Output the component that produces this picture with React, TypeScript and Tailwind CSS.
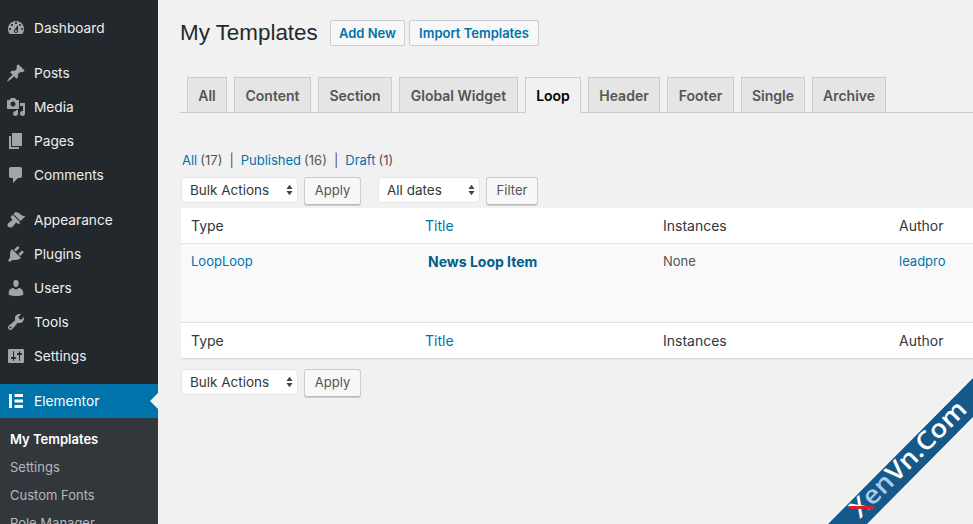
const icons: Record<string, string> = {
  dashboard:
    "M3.76 16h12.48c1.1-1.37 1.76-3.11 1.76-5 0-4.42-3.58-8-8-8s-8 3.58-8 8c0 1.89.66 3.63 1.76 5zM10 4c.55 0 1 .45 1 1s-.45 1-1 1-1-.45-1-1 .45-1 1-1zM6 6c.55 0 1 .45 1 1s-.45 1-1 1-1-.45-1-1 .45-1 1-1zm8 0c.55 0 1 .45 1 1s-.45 1-1 1-1-.45-1-1 .45-1 1-1zm-5.37 5.55L12 7v6c0 1.1-.9 2-2 2s-2-.9-2-2c0-.57.24-1.08.63-1.45zM4 10c.55 0 1 .45 1 1s-.45 1-1 1-1-.45-1-1 .45-1 1-1zm12 0c.55 0 1 .45 1 1s-.45 1-1 1-1-.45-1-1 .45-1 1-1zm-5 3c0-.55-.45-1-1-1s-1 .45-1 1 .45 1 1 1 1-.45 1-1z",
  posts:
    "M10.44 3.02l1.82-1.82 6.36 6.35-1.83 1.82c-1.05-.68-2.48-.57-3.41.36l-.75.75c-.92.93-1.04 2.35-.35 3.41l-1.83 1.82-2.41-2.41-2.8 2.79c-.42.42-3.38 2.71-3.8 2.29s1.86-3.39 2.28-3.81l2.79-2.79L4.1 9.36l1.83-1.82c1.05.69 2.48.57 3.4-.36l.75-.75c.93-.92 1.05-2.35.36-3.41z",
  media:
    "M13 11V4c0-.55-.45-1-1-1h-1.67L9 1H5L3.67 3H2c-.55 0-1 .45-1 1v7c0 .55.45 1 1 1h10c.55 0 1-.45 1-1zM7 4.5c1.38 0 2.5 1.12 2.5 2.5S8.38 9.5 7 9.5 4.5 8.38 4.5 7 5.62 4.5 7 4.5zM14 6h5v10.5c0 1.38-1.12 2.5-2.5 2.5S14 17.88 14 16.5s1.12-2.5 2.5-2.5c.17 0 .34.02.5.05V9h-3V6zm-4 8.05V13h2v3.5c0 1.38-1.12 2.5-2.5 2.5S7 17.88 7 16.5 8.12 14 9.5 14c.17 0 .34.02.5.05z",
  pages: "M6 15V2h10v13H6zm-1 1h8v2H3V5h2v11z",
  comments:
    "M5 2h9c1.1 0 2 .9 2 2v7c0 1.1-.9 2-2 2h-2l-5 5v-5H5c-1.1 0-2-.9-2-2V4c0-1.1.9-2 2-2z",
  appearance:
    "M14.48 11.06L7.41 3.99l1.5-1.5c.5-.56 2.3-.47 3.51.32 1.21.8 1.43 1.28 2.91 2.1 1.18.64 2.45 1.26 4.45.85zm-.71.71L6.7 4.7 4.93 6.47c-.39.39-.39 1.02 0 1.41l1.06 1.06c.39.39.39 1.03 0 1.42-.6.6-1.43 1.11-2.21 1.69-.35.26-.7.53-1.01.84C1.43 13.23.91 15.3 2.3 16.7c1.4 1.39 3.47.87 4.81-.47.31-.31.58-.66.84-1.01.58-.78 1.09-1.61 1.69-2.21.39-.39 1.03-.39 1.42 0l1.06 1.06c.39.39 1.02.39 1.41 0z",
  plugins:
    "M13.11 4.36L9.87 7.6 8 5.73l3.24-3.24c.35-.34 1.05-.2 1.56.32.52.51.66 1.21.31 1.55zm-8 1.77l.91-1.12 9.01 9.01-1.19.84c-.71.71-2.63 1.16-3.82 1.16H6.14L4.9 17.26c-.59.59-1.54.59-2.12 0-.59-.58-.59-1.53 0-2.12l1.24-1.24v-3.88c0-1.13.4-3.19 1.09-3.89zm7.26 3.97l3.24-3.24c.34-.35 1.04-.21 1.55.31.52.51.66 1.21.31 1.55l-3.24 3.25z",
  users:
    "M10 9.25c-2.27 0-2.73-3.44-2.73-3.44C7 4.02 7.82 2 9.97 2c2.16 0 2.98 2.02 2.71 3.81 0 0-.41 3.44-2.68 3.44zm0 2.57L12.72 10c2.39 0 4.52 2.33 4.52 4.53v2.49s-3.65 1.13-7.24 1.13c-3.65 0-7.24-1.13-7.24-1.13v-2.49c0-2.25 1.94-4.48 4.47-4.48z",
  tools:
    "M16.68 9.77c-1.34 1.34-3.3 1.67-4.95.99l-5.41 6.52c-.99.99-2.59.99-3.58 0s-.99-2.59 0-3.57l6.52-5.42c-.68-1.65-.35-3.61.99-4.95 1.28-1.28 3.12-1.62 4.72-1.06l-2.89 2.89 2.82 2.82 2.86-2.87c.53 1.58.18 3.39-1.08 4.65zM3.81 16.21c.4.39 1.04.39 1.43 0 .4-.4.4-1.04 0-1.43-.39-.4-1.03-.4-1.43 0-.39.39-.39 1.03 0 1.43z",
  settings:
    "M18 16V4c0-.55-.45-1-1-1H3c-.55 0-1 .45-1 1v12c0 .55.45 1 1 1h14c.55 0 1-.45 1-1zM8 11h1c.55 0 1 .45 1 1s-.45 1-1 1H8v1.5c0 .28-.22.5-.5.5s-.5-.22-.5-.5V13H6c-.55 0-1-.45-1-1s.45-1 1-1h1V5.5c0-.28.22-.5.5-.5s.5.22.5.5V11zm5-2h-1c-.55 0-1-.45-1-1s.45-1 1-1h1V5.5c0-.28.22-.5.5-.5s.5.22.5.5V7h1c.55 0 1 .45 1 1s-.45 1-1 1h-1v5.5c0 .28-.22.5-.5.5s-.5-.22-.5-.5V9z",
};

function MenuIcon({ name }: { name: string }) {
  return (
    <svg viewBox="0 0 20 20" className="w-5 h-5 fill-[#a0a5aa]" fillRule="evenodd">
      <path d={icons[name]} />
    </svg>
  );
}

function MenuItem({ icon, label }: { icon: string; label: string }) {
  return (
    <div className="h-[34px] shrink-0 flex items-center gap-[8px] pl-[6px] text-[13.7px] text-[#eeeeee]">
      <MenuIcon name={icon} />
      <span>{label}</span>
    </div>
  );
}

function Sidebar() {
  return (
    <aside className="w-[158px] shrink-0 bg-[#23282d] pt-[11px] flex flex-col h-full overflow-hidden">
      <MenuItem icon="dashboard" label="Dashboard" />
      <div className="mt-[11px] shrink-0">
        <MenuItem icon="posts" label="Posts" />
        <MenuItem icon="media" label="Media" />
        <MenuItem icon="pages" label="Pages" />
        <MenuItem icon="comments" label="Comments" />
      </div>
      <div className="mt-[11px] shrink-0">
        <MenuItem icon="appearance" label="Appearance" />
        <MenuItem icon="plugins" label="Plugins" />
        <MenuItem icon="users" label="Users" />
        <MenuItem icon="tools" label="Tools" />
        <MenuItem icon="settings" label="Settings" />
      </div>
      <div className="mt-[11px] shrink-0 relative h-[34px] bg-[#0073aa] flex items-center gap-[8px] pl-[6px] text-[13.7px] text-white">
        <svg viewBox="0 0 20 20" className="w-5 h-5 fill-white">
          <rect x="3" y="3" width="3" height="14" />
          <rect x="8.5" y="3" width="8.5" height="3" />
          <rect x="8.5" y="8.5" width="8.5" height="3" />
          <rect x="8.5" y="14" width="8.5" height="3" />
        </svg>
        <span>Elementor</span>
        <div className="absolute right-0 top-[9px] w-0 h-0 border-y-[8px] border-y-transparent border-r-[8px] border-r-[#f1f1f1]" />
      </div>
      <div className="bg-[#32373c] pt-[8px] flex-1 text-[13px] text-[#b4b9be] pl-[10px]">
        <div className="h-[28px] flex items-center font-semibold text-white">My Templates</div>
        <div className="h-[28px] flex items-center">Settings</div>
        <div className="h-[28px] flex items-center">Custom Fonts</div>
        <div className="h-[28px] flex items-center">Role Manager</div>
      </div>
    </aside>
  );
}

const tabs = [
  { label: "All", w: "w-[40px]", gap: "mr-[7px]" },
  { label: "Content", w: "w-[77px]", gap: "mr-[7px]" },
  { label: "Section", w: "w-[74px]", gap: "mr-[7px]" },
  { label: "Global Widget", w: "w-[119px]", gap: "mr-[7px]" },
  { label: "Loop", w: "w-[56px]", gap: "mr-[7px]", active: true },
  { label: "Header", w: "w-[72px]", gap: "mr-[7px]" },
  { label: "Footer", w: "w-[67px]", gap: "mr-[7px]" },
  { label: "Single", w: "w-[64px]", gap: "mr-[7px]" },
  { label: "Archive", w: "w-[74px]", gap: "" },
];

function TopButton({ label, w }: { label: string; w: string }) {
  return (
    <button className={`${w} h-[26px] pt-[1px] rounded-[2px] border border-[#cccccc] bg-[#f7f7f7] text-[13px] font-semibold text-[#0073aa]`}>
      {label}
    </button>
  );
}

function Select({ label, w }: { label: string; w: string }) {
  return (
    <div className={`${w} h-[26px] rounded-[4px] border border-[#e6e6e6] bg-white flex items-center justify-between pl-[8px] pr-[4px] text-[13.5px] text-[#32373c]`}>
      <span>{label}</span>
      <svg viewBox="0 0 8 12" className="w-[7px] h-[12px] fill-[#444444]">
        <path d="M4 0l3.5 4.8H.5zM4 12L.5 7.2h7z" />
      </svg>
    </div>
  );
}

function GreyButton({ label, w }: { label: string; w: string }) {
  return (
    <button className={`${w} h-[28px] rounded-[3px] border border-[#cccccc] border-b-[#bbbbbb] bg-[#f7f7f7] shadow-[0_1px_0_#cccccc] text-[13px] text-[#555555]`}>
      {label}
    </button>
  );
}

function HeadRow({ border }: { border: string }) {
  return (
    <div className={`grid grid-cols-[234px_238px_236px_1fr] h-[36px] items-center pl-[10px] text-[14px] text-[#32373c] ${border}`}>
      <span>Type</span>
      <span className="text-[#0073aa]">Title</span>
      <span>Instances</span>
      <span>Author</span>
    </div>
  );
}

function Main() {
  return (
    <main className="flex-1 min-w-0 h-full overflow-hidden bg-[#f1f1f1] pl-[22px]">
      <div className="flex items-center h-[26px] mt-[20px] gap-[4px]">
        <h1 className="text-[22.4px] font-['Liberation_Sans',sans-serif] text-[#23282d] w-[146px] leading-none whitespace-nowrap">My Templates</h1>
        <TopButton label="Add New" w="w-[75px]" />
        <TopButton label="Import Templates" w="w-[130px]" />
      </div>

      <div className="mt-[31px] h-[36px] flex pl-[7px] border-b border-[#cccccc]">
        {tabs.map((t) => (
          <div
            key={t.label}
            className={`${t.w} ${t.gap} h-[36px] shrink-0 border border-[#cccccc] flex items-center justify-center text-[14px] font-semibold ${
              t.active ? "bg-[#f1f1f1] border-b-[#f1f1f1] text-black" : "bg-[#e5e5e5] text-[#555555]"
            }`}
          >
            {t.label}
          </div>
        ))}
      </div>

      <div className="mt-[39px] h-[18px] flex items-center text-[13px] text-[#555555] whitespace-pre pl-[2px]">
        <span className="text-[#0073aa]">All</span>
        <span className="ml-[3px]">(17)</span>
        <span className="mx-[7px]">|</span>
        <span className="text-[#0073aa]">Published</span>
        <span className="ml-[3px]">(16)</span>
        <span className="mx-[7px]">|</span>
        <span className="text-[#0073aa]">Draft</span>
        <span className="ml-[3px]">(1)</span>
      </div>

      <div className="mt-[7px] ml-px flex items-start">
        <Select label="Bulk Actions" w="w-[117px]" />
        <div className="w-[6px]" />
        <GreyButton label="Apply" w="w-[57px]" />
        <div className="w-[17px]" />
        <Select label="All dates" w="w-[102px]" />
        <div className="w-[6px]" />
        <GreyButton label="Filter" w="w-[52px]" />
      </div>

      <div className="mt-[3px] ml-px w-[900px] bg-white border-b border-[#dddddd] shadow-[0_1px_1px_rgba(0,0,0,0.04)]">
        <HeadRow border="border-b border-[#e1e1e1]" />
        <div className="grid grid-cols-[234px_238px_236px_1fr] h-[78px] pl-[10px] pt-[8px] bg-[#f9f9f9] text-[13px] text-[#555555]">
          <span className="text-[#0073aa]">LoopLoop</span>
          <span className="pl-[3px] text-[14px] font-bold leading-[20px] text-[#005f8a]">News Loop Item</span>
          <span>None</span>
          <span className="text-[#0073aa]">leadpro</span>
        </div>
        <HeadRow border="border-t border-[#e1e1e1]" />
      </div>

      <div className="mt-[10px] ml-px flex items-start">
        <Select label="Bulk Actions" w="w-[117px]" />
        <div className="w-[6px]" />
        <GreyButton label="Apply" w="w-[57px]" />
      </div>
    </main>
  );
}

function Watermark() {
  return (
    <svg viewBox="0 0 973 524" className="absolute inset-0 w-[973px] h-[524px] pointer-events-none">
      <polygon points="973,376 973,419 868,524 826,524" fill="#ffffff" opacity="0.7" />
      <polygon points="973,378 973,417 867,524 828,524" fill="#14598a" />
      <g transform="translate(860,519) rotate(-45)">
        <text
          x="0"
          y="0"
          fontFamily="'Open Sans', sans-serif"
          fontWeight="600"
          fontSize="25"
          fill="#ffffff"
          textLength="153"
          lengthAdjust="spacingAndGlyphs"
        >
          <tspan>X</tspan>
          <tspan fill="#a9cdea">en</tspan>
          <tspan>Vn.Com</tspan>
        </text>
      </g>
      <rect x="850" y="506" width="24" height="3" fill="#d9202c" />
    </svg>
  );
}

export default function App() {
  return (
    <div className="relative w-[973px] h-[524px] overflow-hidden flex font-['Inter','Liberation_Sans',sans-serif]">
      <Sidebar />
      <Main />
      <Watermark />
    </div>
  );
}
